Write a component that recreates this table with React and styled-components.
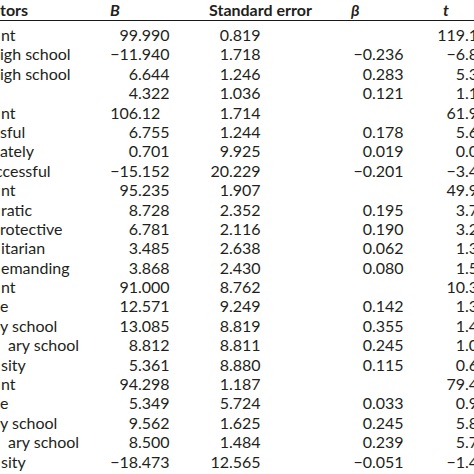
import React from 'react'
import styled, { createGlobalStyle } from 'styled-components'

const GlobalStyle = createGlobalStyle`
  html, body { margin: 0; padding: 0; background: #fff; }
`

const COLS = '100px 90px 110px 120px 80px'

const Page = styled.div`
  width: 474px;
  height: 474px;
  overflow: hidden;
  background: #fff;
  color: #231f20;
  font-family: Lato, "Open Sans", sans-serif;
  font-size: 16px;
`

const HeadRow = styled.div`
  display: grid;
  grid-template-columns: ${COLS};
  height: 20px;
  line-height: 20px;
  border-bottom: 1.5px solid #1a1a1a;
  font-weight: 700;
  white-space: nowrap;
`

const HeadCell = styled.div`
  padding-left: ${p => p.pad || 0}px;
  font-style: ${p => (p.italic ? 'italic' : 'normal')};
`

const Body = styled.div`
  padding-top: 4px;
`

const Row = styled.div`
  display: grid;
  grid-template-columns: ${COLS};
  height: 19.4px;
  line-height: 19.4px;
  white-space: nowrap;
`

const Label = styled.div`
  margin-left: ${p => p.shift || 0}px;
`

const Num = styled.div`
  display: flex;
`

const Int = styled.span`
  flex: none;
  width: ${p => p.w}px;
  text-align: right;
`

const Frac = styled.span`
  flex: none;
`

// decimal point x inside each column
const DEC = { b: 38, se: 39, beta: 72, t: 45 }

const rows = [
  ['nt', 1, '99.990', '0.819', '', '119.1'],
  ['igh school', 0, '−11.940', '1.718', '−0.236', '−6.8'],
  ['igh school', 0, '6.644', '1.246', '0.283', '5.3'],
  ['', 0, '4.322', '1.036', '0.121', '1.1'],
  ['nt', 1, '106.12', '1.714', '', '61.9'],
  ['sful', 0, '6.755', '1.244', '0.178', '5.6'],
  ['ately', 0, '0.701', '9.925', '0.019', '0.0'],
  ['ccessful', -5, '−15.152', '20.229', '−0.201', '−3.4'],
  ['nt', 1, '95.235', '1.907', '', '49.9'],
  ['ratic', 1, '8.728', '2.352', '0.195', '3.7'],
  ['rotective', 0, '6.781', '2.116', '0.190', '3.2'],
  ['itarian', 1, '3.485', '2.638', '0.062', '1.3'],
  ['emanding', 1, '3.868', '2.430', '0.080', '1.5'],
  ['nt', 1, '91.000', '8.762', '', '10.3'],
  ['e', 0, '12.571', '9.249', '0.142', '1.3'],
  ['y school', 0, '13.085', '8.819', '0.355', '1.4'],
  ['ary school', 8, '8.812', '8.811', '0.245', '1.0'],
  ['sity', 1, '5.361', '8.880', '0.115', '0.6'],
  ['nt', 1, '94.298', '1.187', '', '79.4'],
  ['e', 0, '5.349', '5.724', '0.033', '0.9'],
  ['y school', 0, '9.562', '1.625', '0.245', '5.8'],
  ['ary school', 8, '8.500', '1.484', '0.239', '5.7'],
  ['sity', 1, '−18.473', '12.565', '−0.051', '−1.4'],
]

const Value = ({ v, w }) => {
  if (!v) return <Num />
  const i = v.indexOf('.')
  return (
    <Num>
      <Int w={w}>{v.slice(0, i)}</Int>
      <Frac>{v.slice(i)}</Frac>
    </Num>
  )
}

const App = () => {
  return (
    <Page>
      <GlobalStyle />
      <HeadRow>
        <HeadCell>tors</HeadCell>
        <HeadCell pad={10} italic>B</HeadCell>
        <HeadCell pad={19}>Standard error</HeadCell>
        <HeadCell pad={51} italic>β</HeadCell>
        <HeadCell pad={23} italic>t</HeadCell>
      </HeadRow>
      <Body>
        {rows.map(([label, shift, b, se, beta, t], idx) => (
          <Row key={idx}>
            <Label shift={shift}>{label}</Label>
            <Value v={b} w={DEC.b} />
            <Value v={se} w={DEC.se} />
            <Value v={beta} w={DEC.beta} />
            <Value v={t} w={DEC.t} />
          </Row>
        ))}
      </Body>
    </Page>
  )
}

export default App
